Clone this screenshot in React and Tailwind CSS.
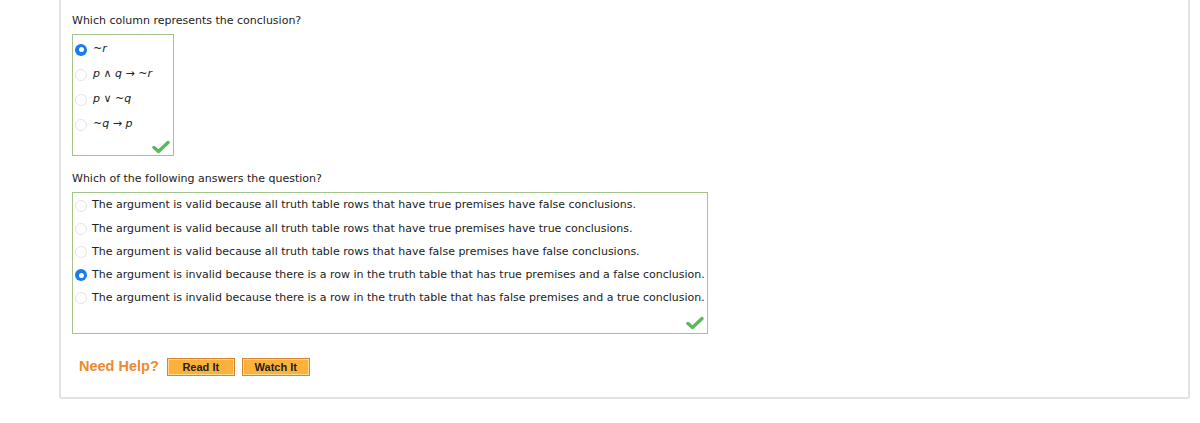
import React from "react";

const font = { fontFamily: "Verdana, 'DejaVu Sans', sans-serif" };

function Radio({ checked }) {
  if (checked) {
    return (
      <span className="w-[12px] h-[12px] rounded-full bg-[#1a7bea] flex items-center justify-center shrink-0">
        <span className="w-[5px] h-[5px] rounded-full bg-white" />
      </span>
    );
  }
  return <span className="inline-block w-[12px] h-[12px] rounded-full border border-[#e4e4e4] bg-white shrink-0" />;
}

function Check() {
  return (
    <svg width="18" height="14" viewBox="0 0 18 14">
      <path d="M2 7.5 L6.5 11.5 L16 2.5" fill="none" stroke="#5cb85c" strokeWidth="3.4" strokeLinecap="round" strokeLinejoin="round" />
    </svg>
  );
}

const I = ({ children }) => <span className="italic">{children}</span>;

const columns = [
  { label: <>~<I>r</I></>, checked: true },
  { label: <><I>p</I> ∧ <I>q</I> → ~<I>r</I></>, checked: false },
  { label: <><I>p</I> ∨ ~<I>q</I></>, checked: false },
  { label: <>~<I>q</I> → <I>p</I></>, checked: false },
];

const answers = [
  { text: "The argument is valid because all truth table rows that have true premises have false conclusions.", checked: false },
  { text: "The argument is valid because all truth table rows that have true premises have true conclusions.", checked: false },
  { text: "The argument is valid because all truth table rows that have false premises have false conclusions.", checked: false },
  { text: "The argument is invalid because there is a row in the truth table that has true premises and a false conclusion.", checked: true },
  { text: "The argument is invalid because there is a row in the truth table that has false premises and a true conclusion.", checked: false },
];

function HelpButton({ children }) {
  return (
    <span className="inline-block w-[68px] border border-[#d9832f] p-[1px] bg-[#fcd890]">
      <span className="flex items-center justify-center h-[14px] bg-[#fbb13c] text-[11px] font-bold text-[#222]" style={{ fontFamily: "Arial, 'Liberation Sans', sans-serif" }}>
        {children}
      </span>
    </span>
  );
}

export default function App() {
  return (
    <div className="bg-white w-[1200px] h-[423px] text-[#222]" style={font}>
      <div className="ml-[59px] w-[1131px] h-[399px] border-l-2 border-r-2 border-b-2 border-[#e3e3e3] rounded-b-[3px] pl-[11px] pt-[12px]">
        <div className="text-[11px] leading-[18px]">Which column represents the conclusion?</div>
        <div className="mt-[4px] w-[102px] h-[122px] border border-[#a3c58c] pt-[2px] pr-[2px] flex flex-col">
          {columns.map((c, i) => (
            <div key={i} className="flex items-center h-[25px] pl-[2px]">
              <Radio checked={c.checked} />
              <span className="ml-[6px] text-[11px]">{c.label}</span>
            </div>
          ))}
          <div className="flex justify-end mt-[3px] pr-[1px]"><Check /></div>
        </div>
        <div className="mt-[14px] text-[11px] leading-[18px]">Which of the following answers the question?</div>
        <div className="mt-[4px] w-[636px] h-[142px] border border-[#a3c58c] pt-[1px] pr-[2px] flex flex-col">
          {answers.map((a, i) => (
            <div key={i} className="flex items-center h-[23.2px] pl-[2px]">
              <Radio checked={a.checked} />
              <span className="ml-[5px] text-[11px] whitespace-nowrap">{a.text}</span>
            </div>
          ))}
          <div className="flex justify-end mt-[6px] pr-[1px]"><Check /></div>
        </div>
        <div className="mt-[22px] ml-[7px] flex items-center gap-[7px]">
          <span className="text-[14.5px] font-bold text-[#ee8a2b] mr-[1px]" style={{ fontFamily: "Arial, 'Liberation Sans', sans-serif" }}>Need Help?</span>
          <HelpButton>Read It</HelpButton>
          <HelpButton>Watch It</HelpButton>
        </div>
      </div>
    </div>
  );
}
